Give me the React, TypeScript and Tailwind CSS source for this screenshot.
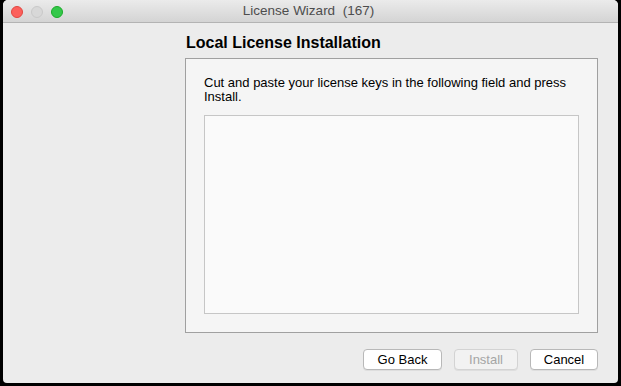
import React from 'react';

const font = { fontFamily: '"Liberation Sans", Arial, sans-serif' };

const Btn = ({ label, disabled }: { label: string; disabled?: boolean }) => (
  <button
    className={
      'h-[21px] w-full rounded-[4px] border text-[13px] leading-none shadow-[0_1px_0_rgba(0,0,0,0.06)] ' +
      (disabled
        ? 'border-[#d3d3d3] bg-[#f2f2f2] text-[#a5a5a5]'
        : 'border-[#b8b8b8] bg-white text-black')
    }
  >
    {label}
  </button>
);

const App = () => {
  return (
    <div className="w-[621px] h-[386px] bg-black pl-[3px] pr-[3px] pb-[3px]" style={font}>
      <div className="flex h-full flex-col overflow-hidden rounded-t-[5px] rounded-b-[4px] bg-[#ececec]">
        {/* title bar */}
        <div className="relative flex h-[23px] items-center border-b border-[#b3b3b3] bg-gradient-to-b from-[#ebebeb] to-[#d4d4d4]">
          <div className="absolute left-[8px] top-[6px] flex gap-[8px]">
            <span className="h-[12px] w-[12px] rounded-full border border-[#e2463f] bg-[#fc605c]" />
            <span className="h-[12px] w-[12px] rounded-full border border-[#c9c9c9] bg-[#d8d8d8]" />
            <span className="h-[12px] w-[12px] rounded-full border border-[#1aab29] bg-[#34c84a]" />
          </div>
          <div className="w-full pr-[4px] text-center text-[13.5px] text-[#4d4d4d]">
            License Wizard&nbsp;&nbsp;(167)
          </div>
        </div>

        {/* body */}
        <div className="flex flex-1">
          <div className="w-[182px]" />
          <div className="flex flex-1 flex-col pr-[17px]">
            <h1 className="mt-[10px] h-[25px] pl-[1px] text-[16px] font-bold leading-[20px] text-black">
              Local License Installation
            </h1>
            <div className="flex h-[275px] w-[413px] flex-col border border-[#a0a0a0] bg-[#f5f5f5] px-[18px] pt-[17px]">
              <p className="text-[13px] leading-[14px] text-black">
                Cut and paste your license keys in the following field and press Install.
              </p>
              <div className="mt-[11px] h-[199px] w-[375px] border border-[#c6c6c6] bg-[#fafafa]" />
            </div>
            <div className="mt-[14px] flex justify-end gap-[12px] pr-[3px]">
              <div className="w-[79px]"><Btn label="Go Back" /></div>
              <div className="w-[64px]"><Btn label="Install" disabled /></div>
              <div className="w-[68px]"><Btn label="Cancel" /></div>
            </div>
          </div>
        </div>
      </div>
    </div>
  );
};

export default App;
